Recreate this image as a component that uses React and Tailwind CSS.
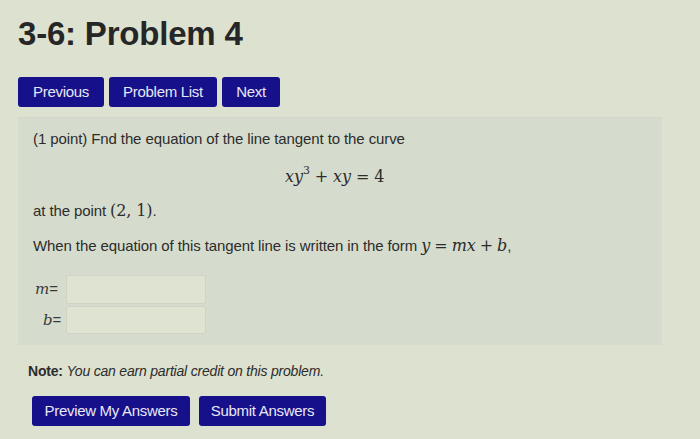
import React from "react";

const Btn = ({ children, className = "" }) => (
  <button
    className={`h-[30px] rounded-[3px] bg-[#16108a] text-[15px] text-[#e8e8f4] tracking-[-0.3px] ${className}`}
  >
    {children}
  </button>
);

const M = ({ children, className = "" }) => (
  <span className={`font-['DejaVu_Serif','Liberation_Serif',serif] ${className}`}>{children}</span>
);

export default function App() {
  return (
    <div className="w-[700px] h-[439px] overflow-hidden bg-[#dde1cf] font-['Liberation_Sans',Arial,sans-serif] text-[#2a2a2a]">
      <div className="pl-[18px] pt-[14px]">
        <h1 className="text-[33px] font-bold leading-[40px] text-[#262626] tracking-[-0.2px]">3-6: Problem 4</h1>
        <div className="mt-[23px] flex gap-[5px]">
          <Btn className="w-[86px]">Previous</Btn>
          <Btn className="w-[108px]">Problem List</Btn>
          <Btn className="w-[58px]">Next</Btn>
        </div>
      </div>

      <div className="ml-[18px] mt-[10px] w-[644px] h-[228px] bg-[#d6dccd] border-t border-[#cfd6c8] pl-[15px] pt-[10px] text-[15px] tracking-[-0.1px] text-[#2c2c2c]">
        <p className="leading-[22px]">(1 point) Fnd the equation of the line tangent to the curve</p>
        <p className="mt-[15px] pl-[252px] leading-[24px] text-[16px]">
          <M className="italic">xy</M>
          <span className="inline-block -translate-y-[8px] text-[11px] leading-none font-['DejaVu_Serif',serif]">3</span>
          <M> + </M>
          <M className="italic">xy</M>
          <M> = 4</M>
        </p>
        <p className="mt-[11px] leading-[22px]">
          at the point <M className="text-[16px]">(2, 1)</M>.
        </p>
        <p className="mt-[13px] leading-[22px]">
          When the equation of this tangent line is written in the form{" "}
          <M className="italic text-[16px]">y</M> <M className="text-[16px]">=</M>{" "}
          <M className="italic text-[16px]">mx</M> <M className="text-[16px]">+</M>{" "}
          <M className="italic text-[16px]">b</M>,
        </p>
        <div className="mt-[18px] flex flex-col gap-[2px]">
          <div className="flex items-center">
            <span className="w-[33px] pl-[2px] text-[15px] text-[#3a3a3a]">
              <M className="italic">m</M>=
            </span>
            <div className="w-[140px] h-[29px] border border-[#cfd5c3] bg-[#dfe3d2] rounded-[2px]" />
          </div>
          <div className="flex items-center">
            <span className="w-[33px] pl-[10px] text-[15px] text-[#3a3a3a]">
              <M className="italic">b</M>=
            </span>
            <div className="w-[140px] h-[28px] border border-[#cfd5c3] bg-[#dfe3d2] rounded-[2px]" />
          </div>
        </div>
      </div>

      <p className="ml-[28px] mt-[16px] text-[14px] tracking-[-0.2px] text-[#2c2c2c] leading-[20px]">
        <b>Note:</b> <i>You can earn partial credit on this problem.</i>
      </p>
      <div className="ml-[32px] mt-[15px] flex gap-[9px]">
        <Btn className="w-[158px] bg-[#1a1c9c]">Preview My Answers</Btn>
        <Btn className="w-[127px] bg-[#1a1c9c]">Submit Answers</Btn>
      </div>
    </div>
  );
}
